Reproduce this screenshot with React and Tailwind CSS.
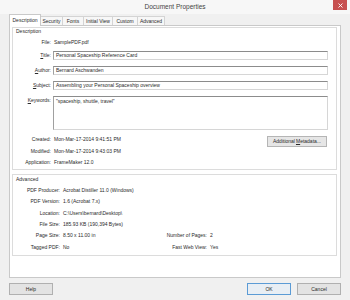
import React from "react";

const tabs = [
  { name: "Description", w: "w-[32px]" },
  { name: "Security", w: "w-[22px]" },
  { name: "Fonts", w: "w-[21px]" },
  { name: "Initial View", w: "w-[29px]" },
  { name: "Custom", w: "w-[25px]" },
  { name: "Advanced", w: "w-[27px]" },
];

const Field = ({ label, children, mt }) => (
  <div className={`flex items-center h-[9px] pr-[8px] ${mt}`}>
    <div className="w-[38px] text-right">{label}</div>
    <div className="ml-[2px] flex-1 h-[9px] bg-white border border-[#d6d6d6] border-t-[#8c8c8c] border-l-[#a0a0a0] flex items-center pl-[2px]">
      {children}
    </div>
  </div>
);

const InfoRow = ({ label, value, mt }) => (
  <div className={`flex items-center h-[8px] ${mt}`}>
    <div className="w-[38px] text-right">{label}</div>
    <div className="ml-[3px]">{value}</div>
  </div>
);

const AdvRow = ({ label, value, mt, label2, value2 }) => (
  <div className={`flex items-center h-[8px] ${mt}`}>
    <div className="w-[47px] text-right">{label}</div>
    <div className="ml-[3px] w-[87px]">{value}</div>
    {label2 && (
      <>
        <div className="w-[57px] text-right">{label2}</div>
        <div className="ml-[3px]">{value2}</div>
      </>
    )}
  </div>
);

export default function App() {
  return (
    <div className="w-[350px] h-[300px] bg-[#f0f0f0] text-[5px] leading-none text-[#2a2a2a] font-['Liberation_Sans',Arial,sans-serif] flex flex-col overflow-hidden">
      {/* title bar */}
      <div className="h-[14px] bg-[#f7f7f7] flex items-start relative">
        <div className="flex-1 text-center text-[6.5px] text-[#444] pt-[4px]">Document Properties</div>
        <div className="absolute right-[3px] top-0 w-[14px] h-[10px] bg-[#c75050] flex items-center justify-center">
          <svg width="5" height="5" viewBox="0 0 5 5">
            <path d="M0.5 0.5 L4.5 4.5 M4.5 0.5 L0.5 4.5" stroke="#fff" strokeWidth="0.9" />
          </svg>
        </div>
      </div>

      <div className="px-[9px]">
        {/* tabs */}
        <div className="flex items-end h-[11px]">
          {tabs.map((t, i) =>
            i === 0 ? (
              <div
                key={t.name}
                className={`${t.w} h-[12px] -mb-px relative z-10 bg-white border border-b-0 border-[#c9c9c9] flex items-center justify-center`}
              >
                {t.name}
              </div>
            ) : (
              <div
                key={t.name}
                className={`${t.w} h-[9px] bg-[#f7f7f7] border border-b-0 border-l-0 border-[#d4d4d4] flex items-center justify-center`}
              >
                {t.name}
              </div>
            )
          )}
        </div>

        {/* panel */}
        <div className="h-[253px] bg-white border border-[#c9c9c9] pt-[1px] pl-[2px] pr-[3px]">
          {/* Description group */}
          <div className="h-[143px] border border-[#dcdcdc]">
            <div className="h-[7px] flex items-center pl-[3px]">Description</div>
            <InfoRow label="File:" value="SamplePDF.pdf" mt="mt-[3px]" />
            <Field label={<><span className="underline">T</span>itle:</>} mt="mt-[5px]">
              Personal Spaceship Reference Card
            </Field>
            <Field label={<><span className="underline">A</span>uthor:</>} mt="mt-[6px]">
              Bernard Aschwanden
            </Field>
            <Field label={<><span className="underline">S</span>ubject:</>} mt="mt-[6px]">
              Assembling your Personal Spaceship overview
            </Field>
            <div className="flex items-start h-[34px] pr-[8px] mt-[6px]">
              <div className="w-[38px] text-right h-[9px] flex items-center justify-end">
                <span>
                  <span className="underline">K</span>eywords:
                </span>
              </div>
              <div className="ml-[2px] flex-1 h-[34px] bg-white border border-[#d6d6d6] border-t-[#8c8c8c] border-l-[#a0a0a0] pl-[2px] pt-[2px]">
                "spaceship, shuttle, travel"
              </div>
            </div>
            <div className="flex mt-[5px] pr-[9px]">
              <div className="flex-1">
                <InfoRow label="Created:" value="Mon-Mar-17-2014 9:41:51 PM" mt="" />
                <InfoRow label="Modified:" value="Mon-Mar-17-2014 9:43:03 PM" mt="mt-[4px]" />
                <InfoRow label="Application:" value="FrameMaker 12.0" mt="mt-[3px]" />
              </div>
              <div className="mt-[1px] w-[60px] h-[11px] bg-[#e6e6e6] border border-[#b5b5b5] flex items-center justify-center">
                Additional <span className="underline ml-[1px]">M</span>etadata...
              </div>
            </div>
          </div>

          {/* Advanced group */}
          <div className="h-[82px] mt-[4px] border border-[#dcdcdc]">
            <div className="h-[8px] flex items-center pl-[3px]">Advanced</div>
            <AdvRow label="PDF Producer:" value="Acrobat Distiller 11.0 (Windows)" mt="mt-[3px]" />
            <AdvRow label="PDF Version:" value="1.6 (Acrobat 7.x)" mt="mt-[3px]" />
            <AdvRow label="Location:" value={"C:\\Users\\bernard\\Desktop\\"} mt="mt-[4px]" />
            <AdvRow label="File Size:" value="185.93 KB (190,394 Bytes)" mt="mt-[3px]" />
            <AdvRow
              label="Page Size:"
              value="8.50 x 11.00 in"
              mt="mt-[3px]"
              label2="Number of Pages:"
              value2="2"
            />
            <AdvRow
              label="Tagged PDF:"
              value="No"
              mt="mt-[4px]"
              label2="Fast Web View:"
              value2="Yes"
            />
          </div>
        </div>

        {/* buttons */}
        <div className="flex mt-[5px]">
          <div className="w-[44px] h-[12px] bg-[#e3e3e3] border border-[#b0b0b0] flex items-center justify-center">
            Help
          </div>
          <div className="ml-auto w-[44px] h-[12px] bg-[#e8eef4] border border-[#5b9bd5] flex items-center justify-center">
            OK
          </div>
          <div className="ml-[6px] w-[44px] h-[12px] bg-[#e3e3e3] border border-[#b0b0b0] flex items-center justify-center">
            Cancel
          </div>
        </div>
      </div>
    </div>
  );
}
